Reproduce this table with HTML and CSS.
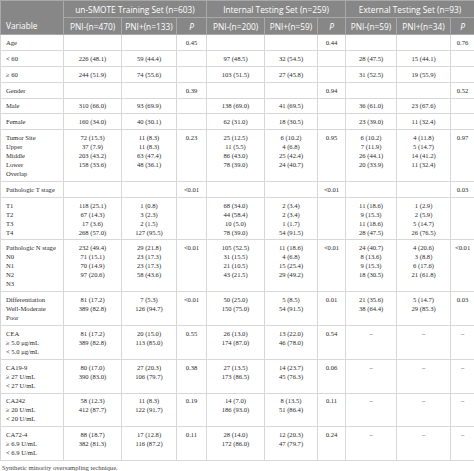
FILE: index.html
```html
<!DOCTYPE html>
<html>
<head>
<meta charset="utf-8">
<link rel="stylesheet" href="styles.css">
</head>
<body>
<table class="tbl">
<colgroup>
<col class="c-var"><col class="c-a"><col class="c-b"><col class="c-p1">
<col class="c-a"><col class="c-c"><col class="c-p2">
<col class="c-d"><col class="c-e"><col class="c-p3">
</colgroup>
<thead>
<tr>
<th class="var" rowspan="2">Variable</th>
<th colspan="3">un-SMOTE Training Set (n=603)</th>
<th colspan="3">Internal Testing Set (n=259)</th>
<th colspan="3">External Testing Set (n=93)</th>
</tr>
<tr>
<th>PNI-(n=470)</th><th>PNI+(n=133)</th><th class="p">P</th>
<th>PNI-(n=200)</th><th>PNI+(n=59)</th><th class="p">P</th>
<th>PNI-(n=59)</th><th>PNI+(n=34)</th><th class="p">P</th>
</tr>
</thead>
<tbody>
<tr><td class="var">Age</td><td></td><td></td><td>0.45</td><td></td><td></td><td>0.44</td><td></td><td></td><td>0.76</td></tr>
<tr><td class="var">&lt; 60</td><td>226 (48.1)</td><td>59 (44.4)</td><td></td><td>97 (48.5)</td><td>32 (54.5)</td><td></td><td>28 (47.5)</td><td>15 (44.1)</td><td></td></tr>
<tr><td class="var">≥ 60</td><td>244 (51.9)</td><td>74 (55.6)</td><td></td><td>103 (51.5)</td><td>27 (45.8)</td><td></td><td>31 (52.5)</td><td>19 (55.9)</td><td></td></tr>
<tr><td class="var">Gender</td><td></td><td></td><td>0.39</td><td></td><td></td><td>0.94</td><td></td><td></td><td>0.52</td></tr>
<tr><td class="var">Male</td><td>310 (66.0)</td><td>93 (69.9)</td><td></td><td>138 (69.0)</td><td>41 (69.5)</td><td></td><td>36 (61.0)</td><td>23 (67.6)</td><td></td></tr>
<tr><td class="var">Female</td><td>160 (34.0)</td><td>40 (30.1)</td><td></td><td>62 (31.0)</td><td>18 (30.5)</td><td></td><td>23 (39.0)</td><td>11 (32.4)</td><td></td></tr>
<tr><td class="var">Tumor Site<br>Upper<br>Middle<br>Lower<br>Overlap</td>
<td>72 (15.3)<br>37 (7.9)<br>203 (43.2)<br>158 (33.6)</td>
<td>11 (8.3)<br>11 (8.3)<br>63 (47.4)<br>48 (36.1)</td>
<td>0.23</td>
<td>25 (12.5)<br>11 (5.5)<br>86 (43.0)<br>78 (39.0)</td>
<td>6 (10.2)<br>4 (6.8)<br>25 (42.4)<br>24 (40.7)</td>
<td>0.95</td>
<td>6 (10.2)<br>7 (11.9)<br>26 (44.1)<br>20 (33.9)</td>
<td>4 (11.8)<br>5 (14.7)<br>14 (41.2)<br>11 (32.4)</td>
<td>0.97</td></tr>
<tr><td class="var">Pathologic T stage</td><td></td><td></td><td>&lt;0.01</td><td></td><td></td><td>&lt;0.01</td><td></td><td></td><td>0.03</td></tr>
<tr><td class="var">T1<br>T2<br>T3<br>T4</td>
<td>118 (25.1)<br>67 (14.3)<br>17 (3.6)<br>268 (57.0)</td>
<td>1 (0.8)<br>3 (2.3)<br>2 (1.5)<br>127 (95.5)</td>
<td></td>
<td>68 (34.0)<br>44 (58.4)<br>10 (5.0)<br>78 (39.0)</td>
<td>2 (3.4)<br>2 (3.4)<br>1 (1.7)<br>54 (91.5)</td>
<td></td>
<td>11 (18.6)<br>9 (15.3)<br>11 (18.6)<br>28 (47.5)</td>
<td>1 (2.9)<br>2 (5.9)<br>5 (14.7)<br>26 (76.5)</td>
<td></td></tr>
<tr><td class="var">Pathologic N stage<br>N0<br>N1<br>N2<br>N3</td>
<td>232 (49.4)<br>71 (15.1)<br>70 (14.9)<br>97 (20.6)</td>
<td>29 (21.8)<br>23 (17.3)<br>23 (17.3)<br>58 (43.6)</td>
<td>&lt;0.01</td>
<td>105 (52.5)<br>31 (15.5)<br>21 (10.5)<br>43 (21.5)</td>
<td>11 (18.6)<br>4 (6.8)<br>15 (25.4)<br>29 (49.2)</td>
<td>&lt;0.01</td>
<td>24 (40.7)<br>8 (13.6)<br>9 (15.3)<br>18 (30.5)</td>
<td>4 (20.6)<br>3 (8.8)<br>6 (17.6)<br>21 (61.8)</td>
<td>&lt;0.01</td></tr>
<tr><td class="var">Differentiation<br>Well-Moderate<br>Poor</td>
<td>81 (17.2)<br>389 (82.8)</td>
<td>7 (5.3)<br>126 (94.7)</td>
<td>&lt;0.01</td>
<td>50 (25.0)<br>150 (75.0)</td>
<td>5 (8.5)<br>54 (91.5)</td>
<td>0.01</td>
<td>21 (35.6)<br>38 (64.4)</td>
<td>5 (14.7)<br>29 (85.3)</td>
<td>0.03</td></tr>
<tr><td class="var">CEA<br>≥ 5.0 μg/mL<br>&lt; 5.0 μg/mL</td>
<td>81 (17.2)<br>389 (82.8)</td>
<td>20 (15.0)<br>113 (85.0)</td>
<td>0.55</td>
<td>26 (13.0)<br>174 (87.0)</td>
<td>13 (22.0)<br>46 (78.0)</td>
<td>0.54</td>
<td>–</td><td>–</td><td>–</td></tr>
<tr><td class="var">CA19-9<br>≥ 27 U/mL<br>&lt; 27 U/mL</td>
<td>80 (17.0)<br>390 (83.0)</td>
<td>27 (20.3)<br>106 (79.7)</td>
<td>0.38</td>
<td>27 (13.5)<br>173 (86.5)</td>
<td>14 (23.7)<br>45 (76.3)</td>
<td>0.06</td>
<td>–</td><td>–</td><td>–</td></tr>
<tr><td class="var">CA242<br>≥ 20 U/mL<br>&lt; 20 U/mL</td>
<td>58 (12.3)<br>412 (87.7)</td>
<td>11 (8.3)<br>122 (91.7)</td>
<td>0.19</td>
<td>14 (7.0)<br>186 (93.0)</td>
<td>8 (13.5)<br>51 (86.4)</td>
<td>0.11</td>
<td>–</td><td>–</td><td>–</td></tr>
<tr><td class="var">CA72-4<br>≥ 6.9 U/mL<br>&lt; 6.9 U/mL</td>
<td>88 (18.7)<br>382 (81.3)</td>
<td>17 (12.8)<br>116 (87.2)</td>
<td>0.11</td>
<td>28 (14.0)<br>172 (86.0)</td>
<td>12 (20.3)<br>47 (79.7)</td>
<td>0.24</td>
<td>–</td><td>–</td><td>–</td></tr>
</tbody>
</table>
<p class="foot">Synthetic minority oversampling technique.</p>
</body>
</html>
```
FILE: styles.css
```css
body {
  margin: 0;
  background: #ffffff;
}

.tbl {
  width: 474px;
  border-collapse: collapse;
  table-layout: fixed;
  font-family: "Liberation Serif", "Times New Roman", serif;
  font-size: 6.6px;
  color: #2a2a2a;
}

.c-var { width: 63px; }
.c-a { width: 58px; }
.c-b { width: 55px; }
.c-p1 { width: 30px; }
.c-c { width: 53px; }
.c-p2 { width: 28px; }
.c-d { width: 51px; }
.c-e { width: 54px; }
.c-p3 { width: 24px; }

.tbl thead th {
  background: #878787;
  color: #ffffff;
  font-family: "Open Sans", "Liberation Sans", sans-serif;
  font-weight: normal;
  font-size: 8.3px;
  line-height: 11px;
  padding: 2.6px 0;
  border: 1px solid #a9a9a9;
  text-align: center;
  white-space: nowrap;
  overflow: hidden;
}

.tbl thead th.var {
  text-align: left;
  vertical-align: bottom;
  padding-left: 5px;
  padding-bottom: 3px;
}

.tbl thead th.p {
  font-style: italic;
}

.tbl tbody td {
  border: 1px solid #d8d8d8;
  padding: 2.9px 1px;
  line-height: 9px;
  text-align: center;
  vertical-align: top;
  white-space: nowrap;
}

.tbl tbody td.var {
  text-align: left;
  padding-left: 5px;
}

.foot {
  margin: 3px 0 0 2px;
  font-family: "Liberation Serif", "Times New Roman", serif;
  font-size: 6.6px;
  color: #444444;
}
```
